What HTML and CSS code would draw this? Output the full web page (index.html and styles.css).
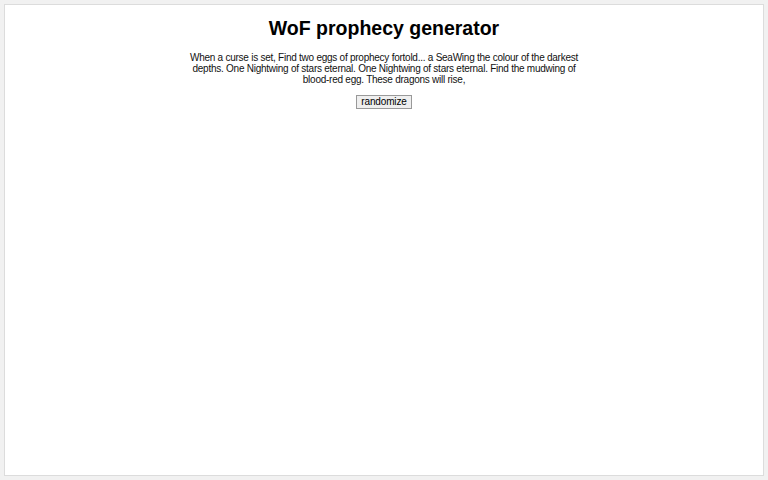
FILE: index.html
```html
<!DOCTYPE html>
<html lang="en">
<head>
    <meta charset="UTF-8">
    <meta name="viewport" content="width=device-width, initial-scale=1.0">
    <title>WoF prophecy generator</title>
    <link rel="stylesheet" href="styles.css">
</head>
<body>
    <div class="page">
        <h1>WoF prophecy generator</h1>
        <p id="prophecy">When a curse is set, Find two eggs of prophecy fortold... a SeaWing the colour of the darkest depths. One Nightwing of stars eternal. One Nightwing of stars eternal. Find the mudwing of blood-red egg. These dragons will rise,</p>
        <button type="button" id="randomize">randomize</button>
    </div>
</body>
</html>
```

FILE: styles.css
```css
html, body { margin: 0; height: 100%; }
body { background: #f1f1f1; padding: 4px; box-sizing: border-box; font-family: "Liberation Sans", Arial, sans-serif; }
.page { background: #fff; border: 1px solid #dcdcdc; height: 100%; box-sizing: border-box; text-align: center; padding-top: 12px; }
h1 { font-size: 19.5px; margin: 0 0 13px; line-height: 22px; }
p { font-size: 10px; letter-spacing: -0.25px; line-height: 11px; max-width: 393px; margin: 0 auto 6px; color: #111; }
button { font-family: "Liberation Sans", Arial, sans-serif; font-size: 10px; letter-spacing: -0.15px; padding: 0 4px; height: 14px; line-height: 12px; background: #efefef; border: 1px solid #999; border-radius: 0; color: #000; }
```
